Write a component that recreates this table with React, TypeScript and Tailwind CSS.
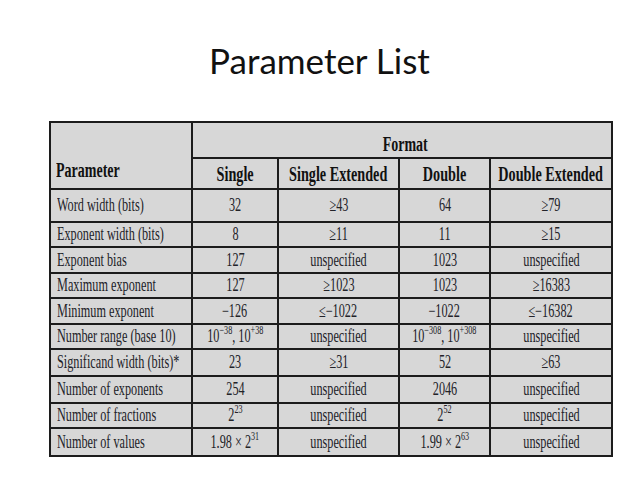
import React from "react";

type Cell = React.ReactNode;

const Sup = ({ children }: { children: React.ReactNode }) => (
  <sup className="text-[12px] relative top-[-1px] align-super leading-none">{children}</sup>
);

const rows: Cell[][] = [
  ["Word width (bits)", "32", "≥43", "64", "≥79"],
  ["Exponent width (bits)", "8", "≥11", "11", "≥15"],
  ["Exponent bias", "127", "unspecified", "1023", "unspecified"],
  ["Maximum exponent", "127", "≥1023", "1023", "≥16383"],
  ["Minimum exponent", "−126", "≤−1022", "−1022", "≤−16382"],
  [
    "Number range (base 10)",
    <>10<Sup>−38</Sup>, 10<Sup>+38</Sup></>,
    "unspecified",
    <>10<Sup>−308</Sup>, 10<Sup>+308</Sup></>,
    "unspecified",
  ],
  ["Significand width (bits)*", "23", "≥31", "52", "≥63"],
  ["Number of exponents", "254", "unspecified", "2046", "unspecified"],
  ["Number of fractions", <>2<Sup>23</Sup></>, "unspecified", <>2<Sup>52</Sup></>, "unspecified"],
  [
    "Number of values",
    <>1.98 × 2<Sup>31</Sup></>,
    "unspecified",
    <>1.99 × 2<Sup>63</Sup></>,
    "unspecified",
  ],
];

const serif = { fontFamily: '"Liberation Serif", "Times New Roman", serif' };

export default function App() {
  return (
    <div className="w-[638px] h-[478px] bg-white overflow-hidden">
      <div className="h-[121px] flex justify-center pt-[38px]">
        <div
          className="text-[35px] leading-[44px] text-[#111] h-[44px] pl-[1px]"
          style={{ fontFamily: 'Lato, "Open Sans", sans-serif' }}
        >
          Parameter List
        </div>
      </div>
      <div
        className="ml-[49px] w-fit grid grid-cols-[140px_84px_119px_89px_120px] grid-rows-[34px_29px_31px_23px_24px_23px_24px_23px_25px_25px_23px_26px] gap-[2px] p-[2px] bg-[#1c1c1c] text-[18px] text-[#222228]"
        style={serif}
      >
        <div className="row-span-2 bg-[#d7d7d7] flex items-end pl-[5px] pb-[3px]">
          <span className="inline-block whitespace-nowrap text-[20px] scale-x-[0.7] origin-left font-bold text-[#111]">
            Parameter
          </span>
        </div>
        <div className="col-span-4 bg-[#d7d7d7] flex items-center justify-center pt-[8px] pl-[6px]">
          <span className="inline-block whitespace-nowrap text-[20px] scale-x-[0.7] origin-center font-bold text-[#111]">
            Format
          </span>
        </div>
        {["Single", "Single Extended", "Double", "Double Extended"].map((h) => (
          <div key={h} className="bg-[#d7d7d7] flex items-center justify-center">
            <span className="inline-block shrink-0 whitespace-nowrap text-[20px] scale-x-[0.71] origin-center font-bold text-[#111]">
              {h}
            </span>
          </div>
        ))}
        {rows.map((r, i) =>
          r.map((c, j) =>
            j === 0 ? (
              <div key={`${i}-${j}`} className="bg-[#d7d7d7] flex items-center pl-[6px] overflow-visible">
                <span className="inline-block shrink-0 whitespace-nowrap scale-x-[0.68] origin-left">{c}</span>
              </div>
            ) : (
              <div key={`${i}-${j}`} className="bg-[#d7d7d7] flex items-center justify-center">
                <span className="inline-block shrink-0 whitespace-nowrap scale-x-[0.68] origin-center">{c}</span>
              </div>
            )
          )
        )}
      </div>
    </div>
  );
}
